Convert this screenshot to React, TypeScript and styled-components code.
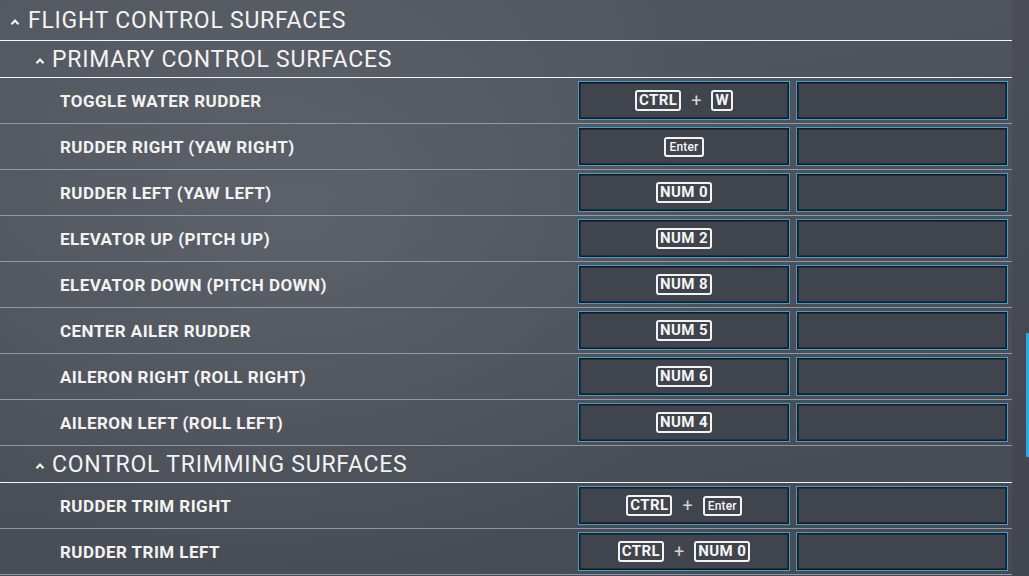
import { Fragment } from "react";
import styled, { createGlobalStyle } from "styled-components";

const GlobalStyle = createGlobalStyle`
  html, body {
    margin: 0;
    padding: 0;
    width: 1029px;
    height: 576px;
    overflow: hidden;
    background: #4c5058;
  }

  * {
    box-sizing: border-box;
  }
`;

const Page = styled.div`
  display: flex;
  width: 1029px;
  height: 576px;
  overflow: hidden;

  font-family: Roboto, "Liberation Sans", sans-serif;
  color: #f3f3f3;

  background:
    radial-gradient(ellipse 700px 500px at 300px 220px, rgba(110, 114, 122, 0.45), transparent 70%),
    linear-gradient(170deg, #53575f 0%, #4d5159 45%, #464a52 100%);
`;

const BindingList = styled.div`
  width: 1012px;
  flex-shrink: 0;
  display: flex;
  flex-direction: column;
`;

const ScrollTrack = styled.div`
  flex: 1;
  display: flex;
  justify-content: flex-end;
  background: rgba(40, 44, 50, 0.12);
`;

const ScrollThumb = styled.div`
  width: 3px;
  height: 124px;
  margin-top: 333px;
  background: #2ea8e6;
`;

const Header = styled.div<{ $level: number }>`
  display: flex;
  align-items: center;
  gap: ${({ $level }) => ($level === 0 ? 8 : 7)}px;
  height: ${({ $level }) => ($level === 0 ? 41 : 37)}px;
  padding-left: ${({ $level }) => ($level === 0 ? 10 : 35)}px;
  padding-top: ${({ $level }) => ($level === 0 ? 1 : 0)}px;

  font-size: 23px;
  font-weight: 400;
  letter-spacing: 0.75px;
  border-bottom: 1.5px solid #f4f4f4;
`;

const ChevronSvg = styled.svg`
  width: 10px;
  height: 8px;
  margin-top: 3px;
  flex-shrink: 0;
`;

const Row = styled.div`
  display: flex;
  align-items: center;
  height: 46px;
  padding: 3px 4px 3px 60px;
  border-bottom: 1px solid rgba(170, 174, 182, 0.75);
`;

const Label = styled.div`
  flex: 1;
  font-size: 17px;
  font-weight: 700;
  letter-spacing: 0.45px;
`;

const Cells = styled.div`
  display: flex;
  gap: 6px;
  height: 39px;
`;

const Cell = styled.div`
  width: 212px;
  display: flex;
  align-items: center;
  justify-content: center;
  gap: 10px;

  background: #40444c;
  border: 1px solid #34a4da;
  box-shadow: inset 0 0 0 1.5px #15181c;
`;

const Key = styled.span<{ $small?: boolean }>`
  display: inline-flex;
  align-items: center;
  justify-content: center;
  height: ${({ $small }) => ($small ? 20 : 21)}px;
  padding: 0 ${({ $small }) => ($small ? 3 : 2)}px;

  font-size: ${({ $small }) => ($small ? 12 : 15)}px;
  font-weight: ${({ $small }) => ($small ? 500 : 700)};
  letter-spacing: ${({ $small }) => ($small ? 0.2 : 0.4)}px;
  line-height: 1;
  color: #f6f6f6;

  border: 2px solid #f3f3f3;
  border-radius: 3px;
`;

const Plus = styled.span`
  font-size: 18px;
  font-weight: 400;
  color: #d4d6da;
  line-height: 1;
`;

type Binding = string[];

type Action = {
  label: string;
  keys: Binding;
};

const primary: Action[] = [
  { label: "TOGGLE WATER RUDDER", keys: ["CTRL", "W"] },
  { label: "RUDDER RIGHT (YAW RIGHT)", keys: ["Enter"] },
  { label: "RUDDER LEFT (YAW LEFT)", keys: ["NUM 0"] },
  { label: "ELEVATOR UP (PITCH UP)", keys: ["NUM 2"] },
  { label: "ELEVATOR DOWN (PITCH DOWN)", keys: ["NUM 8"] },
  { label: "CENTER AILER RUDDER", keys: ["NUM 5"] },
  { label: "AILERON RIGHT (ROLL RIGHT)", keys: ["NUM 6"] },
  { label: "AILERON LEFT (ROLL LEFT)", keys: ["NUM 4"] },
];

const trimming: Action[] = [
  { label: "RUDDER TRIM RIGHT", keys: ["CTRL", "Enter"] },
  { label: "RUDDER TRIM LEFT", keys: ["CTRL", "NUM 0"] },
];

function ChevronUp() {
  return (
    <ChevronSvg viewBox="0 0 10 8">
      <path d="M1.5 6.2 L5 2.6 L8.5 6.2" fill="none" stroke="#f4f4f4" strokeWidth="2.2" />
    </ChevronSvg>
  );
}

function SectionHeader({ level, title }: { level: number; title: string }) {
  return (
    <Header $level={level}>
      <ChevronUp />
      {title}
    </Header>
  );
}

function KeyCombo({ keys }: { keys: Binding }) {
  return (
    <>
      {keys.map((k, i) => (
        <Fragment key={k}>
          {i > 0 && <Plus>+</Plus>}
          <Key $small={k === "Enter"}>{k}</Key>
        </Fragment>
      ))}
    </>
  );
}

function ActionRow({ action }: { action: Action }) {
  return (
    <Row>
      <Label>{action.label}</Label>
      <Cells>
        <Cell>
          <KeyCombo keys={action.keys} />
        </Cell>
        <Cell />
      </Cells>
    </Row>
  );
}

export default function App() {
  return (
    <>
      <GlobalStyle />
      <Page>
        <BindingList>
          <SectionHeader level={0} title="FLIGHT CONTROL SURFACES" />
          <SectionHeader level={1} title="PRIMARY CONTROL SURFACES" />
          {primary.map((a) => (
            <ActionRow key={a.label} action={a} />
          ))}
          <SectionHeader level={1} title="CONTROL TRIMMING SURFACES" />
          {trimming.map((a) => (
            <ActionRow key={a.label} action={a} />
          ))}
        </BindingList>
        <ScrollTrack>
          <ScrollThumb />
        </ScrollTrack>
      </Page>
    </>
  );
}
